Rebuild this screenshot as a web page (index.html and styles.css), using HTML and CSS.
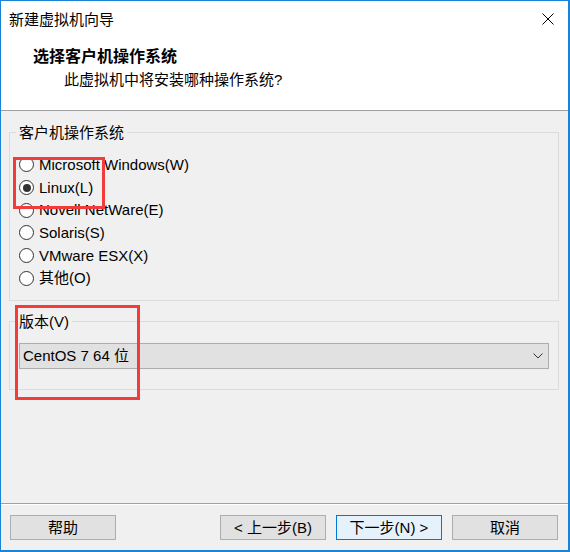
FILE: index.html
```html
<!DOCTYPE html>
<html lang="zh-CN">
<head>
<meta charset="utf-8">
<title>新建虚拟机向导</title>
<link rel="stylesheet" href="styles.css">
</head>
<body>
<div class="window">
  <div class="titlebar">
    <span class="title">新建虚拟机向导</span>
    <span class="close"><svg width="12" height="12" viewBox="0 0 12 12"><path d="M0.5 0.5 L11.5 11.5 M11.5 0.5 L0.5 11.5" stroke="#000" stroke-width="1" fill="none"/></svg></span>
  </div>
  <div class="header">
    <div class="h-title">选择客户机操作系统</div>
    <div class="h-sub">此虚拟机中将安装哪种操作系统?</div>
  </div>
  <div class="content">
    <fieldset class="group group-os">
      <legend>客户机操作系统</legend>
      <div class="radios">
        <div class="radio"><span class="dot"></span><span class="label">Microsoft Windows(W)</span></div>
        <div class="radio"><span class="dot on"></span><span class="label">Linux(L)</span></div>
        <div class="radio"><span class="dot"></span><span class="label">Novell NetWare(E)</span></div>
        <div class="radio"><span class="dot"></span><span class="label">Solaris(S)</span></div>
        <div class="radio"><span class="dot"></span><span class="label">VMware ESX(X)</span></div>
        <div class="radio"><span class="dot"></span><span class="label">其他(O)</span></div>
      </div>
    </fieldset>
    <fieldset class="group group-ver">
      <legend>版本(V)</legend>
      <div class="select">
        <span>CentOS 7 64 位</span>
        <svg width="10" height="6" viewBox="0 0 10 6"><path d="M0.5 0.5 L5 5 L9.5 0.5" stroke="#333" stroke-width="1" fill="none"/></svg>
      </div>
    </fieldset>
  </div>
  <div class="footer">
    <button class="btn">帮助</button>
    <div class="nav">
      <button class="btn">&lt; 上一步(B)</button>
      <button class="btn default">下一步(N) &gt;</button>
      <button class="btn">取消</button>
    </div>
  </div>
  <div class="mark mark-os"></div>
  <div class="mark mark-ver"></div>
</div>
</body>
</html>
```
FILE: styles.css
```css
html, body {
  margin: 0;
  padding: 0;
}
body {
  width: 570px;
  height: 552px;
  font-family: "Liberation Sans", "Noto Sans CJK SC", sans-serif;
  font-size: 15px;
  color: #000;
  background: #f0f0f0;
}
.window {
  position: relative;
  box-sizing: border-box;
  width: 570px;
  height: 552px;
  border: 1px solid #1883d7;
  border-right-width: 2px;
  border-bottom-width: 2px;
  display: flex;
  flex-direction: column;
  background: #f0f0f0;
}
.titlebar {
  flex: none;
  height: 38px;
  display: flex;
  align-items: center;
  justify-content: space-between;
  background: #fff;
  padding-left: 8px;
}
.title {
  line-height: 20px;
}
.close {
  display: flex;
  margin-right: 14px;
  margin-bottom: 2px;
}
.header {
  flex: none;
  height: 72px;
  box-sizing: border-box;
  background: #fff;
  border-bottom: 1px solid #a0a0a0;
  padding: 7px 0 0 32px;
}
.h-title {
  font-weight: bold;
  font-size: 16px;
  line-height: 22px;
}
.h-sub {
  margin: 2px 0 0 31px;
  line-height: 20px;
}
.content {
  flex: 1;
  padding: 0 9px 0 8px;
}
.group {
  margin: 0;
  border: 1px solid #dcdcdc;
  padding: 0 0 0 6px;
  min-width: 0;
}
.group legend {
  padding: 0 3px;
  line-height: 21px;
}
.group-os {
  margin-top: 11px;
  padding-bottom: 10px;
}
.radios {
  margin: 10.67px 0 0 3px;
}
.radio {
  display: flex;
  align-items: center;
  height: 22.667px;
}
.label {
  line-height: 22px;
}
.dot {
  flex: none;
  width: 15px;
  height: 15px;
  box-sizing: border-box;
  border: 1px solid #333;
  border-radius: 50%;
  background: #fff;
  margin-right: 5px;
  display: flex;
  align-items: center;
  justify-content: center;
}
.dot.on::after {
  content: "";
  width: 8px;
  height: 8px;
  border-radius: 50%;
  background: #333;
}
.group-ver {
  margin-top: 10px;
  padding-bottom: 20px;
}
.select {
  margin: 11.5px 9px 0 3px;
  height: 26px;
  box-sizing: border-box;
  border: 1px solid #adadad;
  background: #e1e1e1;
  display: flex;
  align-items: center;
  justify-content: space-between;
  padding: 0 5px 0 3px;
  line-height: 22px;
}
.footer {
  flex: none;
  height: 47px;
  box-sizing: border-box;
  border-top: 1px solid #a0a0a0;
  box-shadow: inset 0 1px 0 #fff;
  padding: 11px 10px 10px 9px;
  display: flex;
  justify-content: space-between;
  align-items: flex-start;
}
.nav {
  display: flex;
  gap: 10px;
}
.btn {
  width: 106px;
  height: 25px;
  box-sizing: border-box;
  border: 1px solid #adadad;
  background: #e1e1e1;
  font-family: inherit;
  font-size: 15px;
  line-height: 23px;
  padding: 0;
  color: #000;
  border-radius: 0;
}
.btn.default {
  border-color: #0078d7;
  background: #e5f1fb;
}
.mark {
  position: absolute;
  box-sizing: border-box;
  border: 3px solid #f23c3c;
  pointer-events: none;
}
.mark-os {
  left: 12px;
  top: 156px;
  width: 92px;
  height: 52px;
}
.mark-ver {
  left: 14px;
  top: 304px;
  width: 125px;
  height: 95px;
}
```
